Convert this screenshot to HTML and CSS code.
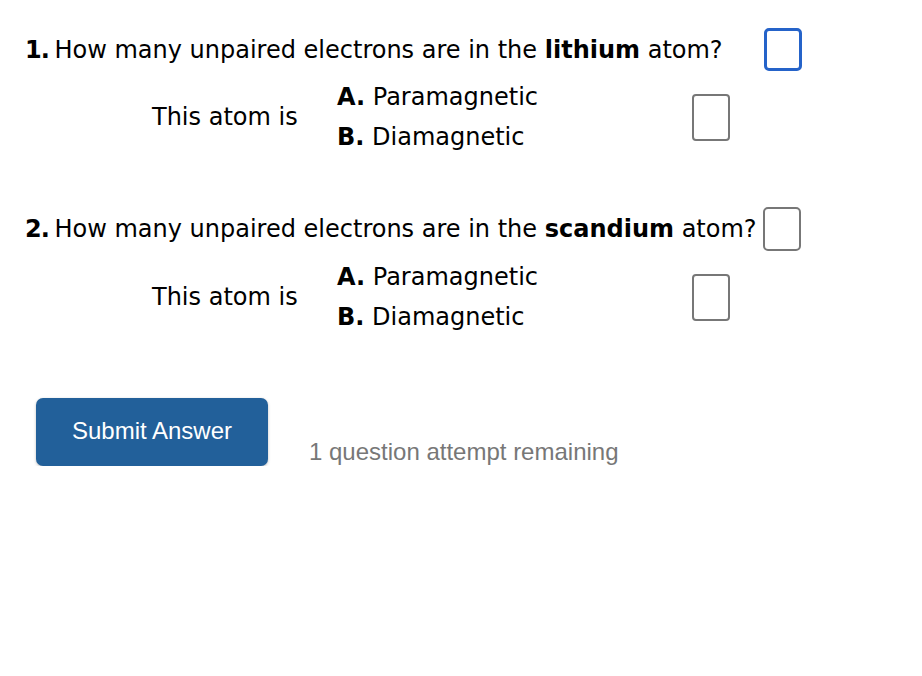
FILE: index.html
```html
<!DOCTYPE html>
<html lang="en">
<head>
    <meta charset="UTF-8">
    <title>Question</title>
    <link rel="stylesheet" href="styles.css">
</head>
<body>
    <div class="page">
        <div class="question">
            <div class="q-text"><b class="num">1.</b> How many unpaired electrons are in the <b>lithium</b> atom?</div>
            <div class="answer-box focused wide-gap"></div>
        </div>
        <div class="sub">
            <div class="label">This atom is</div>
            <div class="options">
                <div><b>A.</b> Paramagnetic</div>
                <div><b>B.</b> Diamagnetic</div>
            </div>
            <div class="select-box"></div>
        </div>

        <div class="question second">
            <div class="q-text"><b class="num">2.</b> How many unpaired electrons are in the <b>scandium</b> atom?</div>
            <div class="answer-box"></div>
        </div>
        <div class="sub">
            <div class="label">This atom is</div>
            <div class="options">
                <div><b>A.</b> Paramagnetic</div>
                <div><b>B.</b> Diamagnetic</div>
            </div>
            <div class="select-box"></div>
        </div>

        <div class="footer">
            <button class="submit">Submit Answer</button>
            <span class="attempts">1 question attempt remaining</span>
        </div>
    </div>
</body>
</html>
```

FILE: styles.css
```css
* {
    margin: 0;
    padding: 0;
    box-sizing: border-box;
}

body {
    background: #fff;
    color: #000;
    font-family: "DejaVu Sans", Verdana, sans-serif;
    font-size: 24px;
}

.page {
    padding: 28px 0 0 25px;
}

.question {
    display: flex;
    align-items: center;
}

.question.second {
    margin-top: 50px;
}

.q-text {
    line-height: 28px;
}

.num {
    letter-spacing: -1px;
    margin-right: -2px;
}

.answer-box {
    width: 38px;
    height: 44px;
    border: 2px solid #777;
    border-radius: 5px;
    margin-left: 6px;
}

.answer-box.focused {
    height: 43px;
    border: 3px solid #2563c9;
}

.answer-box.wide-gap {
    margin-left: 41px;
}

.sub {
    display: flex;
    align-items: center;
    margin-top: 6px;
    padding-left: 127px;
}

.label {
    line-height: 40px;
    width: 185px;
}

.options {
    line-height: 40px;
    width: 355px;
}

.select-box {
    width: 38px;
    height: 47px;
    border: 2px solid #777;
    border-radius: 4px;
}

.footer {
    display: flex;
    align-items: flex-end;
    margin-top: 61px;
    padding-left: 11px;
}

.submit {
    width: 232px;
    height: 68px;
    background: #22609a;
    color: #fff;
    border: none;
    border-radius: 7px;
    box-shadow: 0 1px 3px rgba(0, 0, 0, 0.25);
    font-family: "Liberation Sans", Arial, sans-serif;
    font-size: 24px;
    padding-bottom: 2px;
}

.attempts {
    margin-left: 41px;
    color: #777;
    font-family: "Liberation Sans", Arial, sans-serif;
    font-size: 24px;
    line-height: 28px;
}
```
